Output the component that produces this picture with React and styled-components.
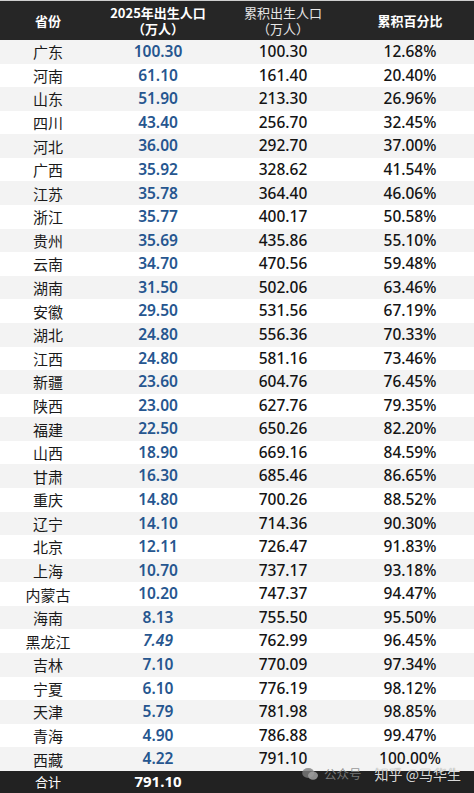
import React from "react";
import styled, { createGlobalStyle } from "styled-components";

const Global = createGlobalStyle`
  html, body { margin: 0; padding: 0; background: #fff; }
  body { font-family: "Noto Sans", "Noto Sans CJK SC", sans-serif; }
`;

const data = [
  ["广东", "100.30", "100.30", "12.68%"],
  ["河南", "61.10", "161.40", "20.40%"],
  ["山东", "51.90", "213.30", "26.96%"],
  ["四川", "43.40", "256.70", "32.45%"],
  ["河北", "36.00", "292.70", "37.00%"],
  ["广西", "35.92", "328.62", "41.54%"],
  ["江苏", "35.78", "364.40", "46.06%"],
  ["浙江", "35.77", "400.17", "50.58%"],
  ["贵州", "35.69", "435.86", "55.10%"],
  ["云南", "34.70", "470.56", "59.48%"],
  ["湖南", "31.50", "502.06", "63.46%"],
  ["安徽", "29.50", "531.56", "67.19%"],
  ["湖北", "24.80", "556.36", "70.33%"],
  ["江西", "24.80", "581.16", "73.46%"],
  ["新疆", "23.60", "604.76", "76.45%"],
  ["陕西", "23.00", "627.76", "79.35%"],
  ["福建", "22.50", "650.26", "82.20%"],
  ["山西", "18.90", "669.16", "84.59%"],
  ["甘肃", "16.30", "685.46", "86.65%"],
  ["重庆", "14.80", "700.26", "88.52%"],
  ["辽宁", "14.10", "714.36", "90.30%"],
  ["北京", "12.11", "726.47", "91.83%"],
  ["上海", "10.70", "737.17", "93.18%"],
  ["内蒙古", "10.20", "747.37", "94.47%"],
  ["海南", "8.13", "755.50", "95.50%"],
  ["黑龙江", "7.49", "762.99", "96.45%", true],
  ["吉林", "7.10", "770.09", "97.34%"],
  ["宁夏", "6.10", "776.19", "98.12%"],
  ["天津", "5.79", "781.98", "98.85%"],
  ["青海", "4.90", "786.88", "99.47%"],
  ["西藏", "4.22", "791.10", "100.00%"],
];

const Page = styled.div`
  position: relative;
  width: 474px;
  height: 793px;
  display: flex;
  flex-direction: column;
  border-top: 1px solid #cfcfcf;
  box-sizing: border-box;
  overflow: hidden;
`;

const Row = styled.div`
  display: grid;
  grid-template-columns: 96px 124px 126px 128px;
  align-items: center;
  justify-items: center;
`;

const HeaderRow = styled(Row)`
  height: 39px;
  background: #262626;
  color: #f2f2f2;
  font-size: 13px;
  line-height: 15.5px;
  font-family: "Noto Sans CJK SC", sans-serif;
`;

const HeadCell = styled.div`
  display: flex;
  flex-direction: column;
  align-items: center;
  text-align: center;
  font-weight: ${(p) => (p.$bold ? 700 : 400)};
  color: ${(p) => (p.$bold ? "#ffffff" : "#e6e6e6")};
`;

const HeadLine = styled.span`
  display: block;
  height: 15.5px;
  white-space: nowrap;
`;

const DataRow = styled(Row)`
  height: 23.58px;
  background: ${(p) => (p.$alt ? "#f3f3f3" : "#ffffff")};
`;

const Name = styled.div`
  font-family: "Noto Sans CJK SC", sans-serif;
  font-size: 15px;
  color: #1a1a1a;
  line-height: 1;
`;

const Num = styled.div`
  font-family: "Noto Sans", sans-serif;
  font-size: 15.5px;
  line-height: 1;
  color: ${(p) => (p.$blue ? "#26568f" : "#141414")};
  font-weight: ${(p) => (p.$blue || p.$bold ? 600 : 500)};
  font-style: ${(p) => (p.$italic ? "italic" : "normal")};
`;

const TotalRow = styled(Row)`
  flex: 1;
  background: #222222;
  color: #ffffff;
`;

const TotalLabel = styled.div`
  font-family: "Noto Sans CJK SC", sans-serif;
  font-size: 13px;
  line-height: 1;
`;

const TotalNum = styled.div`
  font-family: "Noto Sans", sans-serif;
  font-size: 15px;
  font-weight: 700;
  line-height: 1;
`;

const Watermark = styled.div`
  position: absolute;
  left: 302px;
  top: 765px;
  display: flex;
  align-items: center;
  gap: 5px;
  font-family: "Noto Sans CJK SC", sans-serif;
  line-height: 16px;
  pointer-events: none;
`;

const WmGray = styled.span`
  font-size: 12.5px;
  color: rgba(135, 135, 135, 0.85);
`;

const WmLight = styled.span`
  font-size: 14px;
  color: rgba(238, 238, 238, 0.92);
  text-shadow: 0 0 1px rgba(0, 0, 0, 0.55);
  margin-left: 8px;
  white-space: nowrap;
`;

function WeChatIcon() {
  return (
    <svg width="17" height="14" viewBox="0 0 17 14">
      <ellipse cx="6.2" cy="6" rx="6" ry="5" fill="rgba(125,125,125,0.8)" />
      <ellipse cx="11" cy="8.6" rx="5" ry="4.2" fill="rgba(160,160,160,0.85)" />
    </svg>
  );
}

export default function App() {
  return (
    <>
      <Global />
      <Page>
        <HeaderRow>
          <HeadCell $bold>
            <HeadLine>省份</HeadLine>
          </HeadCell>
          <HeadCell $bold>
            <HeadLine>2025年出生人口</HeadLine>
            <HeadLine>（万人）</HeadLine>
          </HeadCell>
          <HeadCell>
            <HeadLine>累积出生人口</HeadLine>
            <HeadLine>（万人）</HeadLine>
          </HeadCell>
          <HeadCell $bold>
            <HeadLine>累积百分比</HeadLine>
          </HeadCell>
        </HeaderRow>
        {data.map(([name, a, b, c, hl], i) => (
          <DataRow key={name} $alt={i % 2 === 0}>
            <Name>{name}</Name>
            <Num $blue $italic={hl}>
              {a}
            </Num>
            <Num>{b}</Num>
            <Num>{c}</Num>
          </DataRow>
        ))}
        <TotalRow>
          <TotalLabel>合计</TotalLabel>
          <TotalNum>791.10</TotalNum>
          <span />
          <span />
        </TotalRow>
        <Watermark>
          <WeChatIcon />
          <WmGray>公众号</WmGray>
          <WmLight>知乎 @马华生</WmLight>
        </Watermark>
      </Page>
    </>
  );
}
